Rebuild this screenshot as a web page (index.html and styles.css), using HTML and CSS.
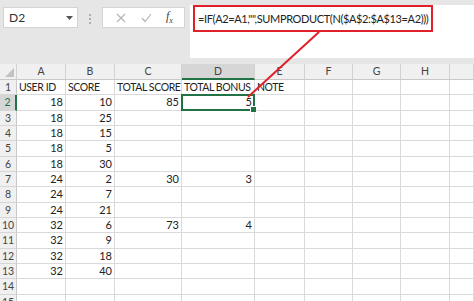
FILE: index.html
```html
<!DOCTYPE html>
<html lang="en">
<head>
    <meta charset="UTF-8">
    <title>Sheet</title>
    <link rel="stylesheet" href="styles.css">
</head>
<body>
    <div class="app">
        <div class="toolbar">
            <div class="name-box">
                <span>D2</span>
                <svg class="caret" width="7" height="4" viewBox="0 0 7 4"><path d="M0 0h7L3.5 4z" fill="#555"/></svg>
            </div>
            <div class="grip">
                <span></span><span></span><span></span>
            </div>
            <div class="fx-buttons">
                <svg width="10" height="10" viewBox="0 0 10 10"><path d="M1 1l8 8M9 1l-8 8" stroke="#b5b5b5" stroke-width="1.2"/></svg>
                <svg width="11" height="10" viewBox="0 0 11 10"><path d="M1 5l3 3.5L10 1" stroke="#b5b5b5" stroke-width="1.2" fill="none"/></svg>
                <span class="fx">f<sub>x</sub></span>
            </div>
            <div class="formula">
                <div class="formula-text">=IF(A2=A1,"",SUMPRODUCT(N($A$2:$A$13=A2)))</div>
            </div>
        </div>

        <div class="sheet" id="sheet"></div>

        <svg class="callout" width="474" height="301" viewBox="0 0 474 301">
            <line x1="319" y1="32" x2="248" y2="97" stroke="#e0202b" stroke-width="2"/>
        </svg>
    </div>

    <script>
        const cols = ['A', 'B', 'C', 'D', 'E', 'F', 'G', 'H', ''];
        const rows = {
            1: ['USER ID', 'SCORE', 'TOTAL SCORE', 'TOTAL BONUS', 'NOTE'],
            2: [18, 10, 85, 5],
            3: [18, 25],
            4: [18, 15],
            5: [18, 5],
            6: [18, 30],
            7: [24, 2, 30, 3],
            8: [24, 7],
            9: [24, 21],
            10: [32, 6, 73, 4],
            11: [32, 9],
            12: [32, 18],
            13: [32, 40]
        };

        const sheet = document.getElementById('sheet');

        // header row
        const corner = document.createElement('div');
        corner.className = 'cell col-head corner';
        sheet.appendChild(corner);
        cols.forEach(c => {
            const el = document.createElement('div');
            el.className = 'cell col-head' + (c === 'D' ? ' active' : '');
            el.textContent = c;
            sheet.appendChild(el);
        });

        // body rows
        for (let r = 1; r <= 15; r++) {
            const head = document.createElement('div');
            head.className = 'cell row-head' + (r === 2 ? ' active' : '');
            head.textContent = r;
            sheet.appendChild(head);

            const values = rows[r] || [];
            cols.forEach((c, i) => {
                const el = document.createElement('div');
                const v = values[i];
                el.className = 'cell' + (typeof v === 'number' ? ' num' : ' text');
                if (v !== undefined) el.textContent = v;
                if (r === 2 && c === 'D') el.classList.add('selected');
                sheet.appendChild(el);
            });
        }
    </script>
</body>
</html>
```

FILE: styles.css
```css
* {
    margin: 0;
    padding: 0;
    box-sizing: border-box;
}

body {
    width: 474px;
    height: 301px;
    overflow: hidden;
    background: #e6e6e6;
    font-family: 'Lato', 'Open Sans', sans-serif;
    color: #222;
}

.app {
    position: relative;
    width: 474px;
    height: 301px;
}

.toolbar {
    display: flex;
    align-items: flex-start;
    height: 64px;
    padding-top: 5px;
}

.name-box {
    display: flex;
    align-items: center;
    justify-content: space-between;
    margin: 2px 0 0 3px;
    width: 75px;
    height: 21px;
    padding: 0 4px 0 5px;
    background: #fff;
    border: 1px solid #d4d4d4;
    font-size: 12px;
    color: #333;
}

.grip {
    display: flex;
    flex-direction: column;
    align-items: center;
    gap: 2px;
    width: 24px;
    padding-top: 9px;
}

.grip span {
    width: 2px;
    height: 2px;
    background: #b0b0b0;
}

.fx-buttons {
    display: flex;
    align-items: center;
    justify-content: space-around;
    margin-top: 2px;
    width: 83px;
    height: 21px;
    padding: 0 4px 0 6px;
    background: #fff;
    border: 1px solid #d4d4d4;
}

.fx {
    font-family: 'Liberation Serif', serif;
    font-style: italic;
    font-size: 12px;
    color: #444;
}

.fx sub {
    font-size: 8px;
}

.formula {
    margin-left: 5px;
    flex: 1;
    height: 53px;
    background: #fff;
    padding-left: 3px;
}

.formula-text {
    display: inline-block;
    width: 240px;
    height: 27px;
    border: 2px solid #e0202b;
    padding: 5px 0 0 3px;
    font-size: 11px;
    color: #222;
    white-space: nowrap;
    letter-spacing: -0.37px;
}

.sheet {
    display: grid;
    grid-template-columns: 17px 49px 49px 67px 73px 50px 48px 48px 49px 24px;
    grid-template-rows: 16px repeat(15, 15.33px);
    background: #fff;
}

.cell {
    position: relative;
    border-right: 1px solid #dadada;
    border-bottom: 1px solid #dadada;
    font-size: 10.5px;
    letter-spacing: -0.4px;
    line-height: 14px;
    white-space: nowrap;
    overflow: visible;
    padding: 0 2px;
}

.cell.num {
    text-align: right;
    overflow: hidden;
    letter-spacing: 0;
    font-size: 11px;
}

.col-head {
    background: #f0f0f0;
    color: #444;
    text-align: center;
    border-right-color: #d2d2d2;
    border-bottom-color: #c8c8c8;
    line-height: 15px;
    letter-spacing: 0;
}

.corner {
    background: #f0f0f0;
}

.corner::after {
    content: '';
    position: absolute;
    right: 2px;
    bottom: 2px;
    border-style: solid;
    border-width: 0 0 9px 9px;
    border-color: transparent transparent #c2c2c2 transparent;
}

.row-head {
    background: #f0f0f0;
    color: #444;
    text-align: center;
    padding: 0;
    letter-spacing: 0;
    border-right-color: #c8c8c8;
    border-bottom-color: #d6d6d6;
}

.col-head.active {
    background: #d6d6d6;
    border-bottom: 2px solid #217346;
}

.row-head.active {
    background: #d6d6d6;
    border-right: 2px solid #217346;
    color: #217346;
}

.cell.selected::after {
    content: '';
    position: absolute;
    left: -1px;
    top: -1px;
    right: -1px;
    bottom: -1px;
    border: 2px solid #217346;
}

.cell.selected::before {
    content: '';
    position: absolute;
    right: -3px;
    bottom: -3px;
    width: 5px;
    height: 5px;
    background: #217346;
    border: 1px solid #fff;
    z-index: 1;
}

.cell.selected {
    overflow: visible;
}

.callout {
    position: absolute;
    left: 0;
    top: 0;
    pointer-events: none;
}
```
